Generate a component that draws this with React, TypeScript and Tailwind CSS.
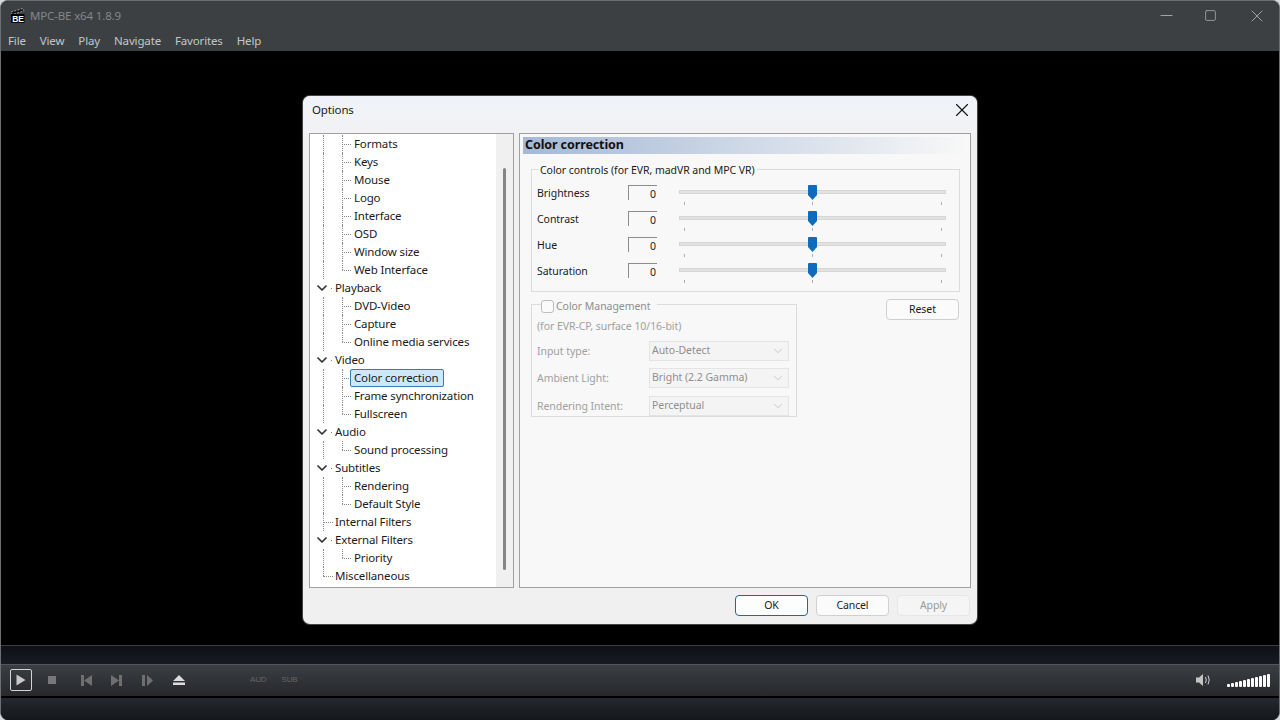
import { ReactNode } from 'react';
import { X, Minus, Square, ChevronDown } from 'lucide-react';

type TreeRow = {
  label: string;
  // level 0 rows sit on the first guide, level 1 rows on the second
  level: 0 | 1;
  expander?: boolean;
  lastChild?: boolean;
  selected?: boolean;
};

const treeRows: TreeRow[] = [
  { label: 'Formats', level: 1 },
  { label: 'Keys', level: 1 },
  { label: 'Mouse', level: 1 },
  { label: 'Logo', level: 1 },
  { label: 'Interface', level: 1 },
  { label: 'OSD', level: 1 },
  { label: 'Window size', level: 1 },
  { label: 'Web Interface', level: 1, lastChild: true },
  { label: 'Playback', level: 0, expander: true },
  { label: 'DVD-Video', level: 1 },
  { label: 'Capture', level: 1 },
  { label: 'Online media services', level: 1, lastChild: true },
  { label: 'Video', level: 0, expander: true },
  { label: 'Color correction', level: 1, selected: true },
  { label: 'Frame synchronization', level: 1 },
  { label: 'Fullscreen', level: 1, lastChild: true },
  { label: 'Audio', level: 0, expander: true },
  { label: 'Sound processing', level: 1, lastChild: true },
  { label: 'Subtitles', level: 0, expander: true },
  { label: 'Rendering', level: 1 },
  { label: 'Default Style', level: 1, lastChild: true },
  { label: 'Internal Filters', level: 0 },
  { label: 'External Filters', level: 0, expander: true },
  { label: 'Priority', level: 1, lastChild: true },
  { label: 'Miscellaneous', level: 0, lastChild: true },
];

function TreeItem({ row }: { row: TreeRow }) {
  if (row.level === 0) {
    return (
      <div className="flex h-[18px] items-center">
        <div className="relative h-full w-[25px] shrink-0">
          {row.expander ? (
            <>
              <ChevronDown size={16} strokeWidth={2.6} className="absolute left-[4px] top-[1px] text-[#333]" />
              <span className="absolute left-[21px] top-[9px] h-px w-px bg-[#777]" />
            </>
          ) : (
            <>
              <span className={`absolute left-[13px] top-0 border-l border-dotted border-[#888] ${row.lastChild ? 'h-[9px]' : 'h-full'}`} />
              <span className="absolute left-[13px] top-[9px] w-[10px] border-t border-dotted border-[#888]" />
            </>
          )}
        </div>
        <span className="mb-[1px] text-[#1a1a1a]">{row.label}</span>
      </div>
    );
  }
  return (
    <div className="flex h-[18px] items-center">
      <div className="relative h-full w-[44px] shrink-0">
        <span className="absolute left-[13px] top-0 h-full border-l border-dotted border-[#888]" />
        <span className={`absolute left-[32px] top-0 border-l border-dotted border-[#888] ${row.lastChild ? 'h-[9px]' : 'h-full'}`} />
        <span className="absolute left-[32px] top-[9px] w-[9px] border-t border-dotted border-[#888]" />
      </div>
      <span
        className={
          row.selected
            ? '-ml-[4px] w-[94px] rounded-[2px] border border-[#2f7fb5] bg-[#cce8ff] pl-[3px] leading-[15px] pb-[1px] text-[#1a1a1a]'
            : 'mb-[1px] text-[#1a1a1a]'
        }
      >
        {row.label}
      </span>
    </div>
  );
}

function SliderRow({ label }: { label: string }) {
  return (
    <div className="flex h-[26px] items-start">
      <span className="w-[91px] shrink-0 pt-[1px] text-[#1a1a1a]">{label}</span>
      <span className="h-[15px] w-[29px] shrink-0 border-l border-t border-[#8c8c8c] pr-[1px] text-right leading-[17px] text-[#1a1a1a]">
        0
      </span>
      <div className="relative ml-[22px] h-[24px] w-[267px]">
        <div className="absolute left-0 right-0 top-[5px] h-[4px] border border-[#d6d6d6] bg-[#e2e2e2]" />
        <span className="absolute left-[5px] top-[17px] h-[3px] w-px bg-[#b0b0b0]" />
        <span className="absolute left-[133px] top-[17px] h-[3px] w-px bg-[#b0b0b0]" />
        <span className="absolute left-[262px] top-[17px] h-[3px] w-px bg-[#b0b0b0]" />
        <svg className="absolute left-[129px] top-0" width="9" height="15" viewBox="0 0 9 15">
          <path d="M0 1q0-1 1-1h7q1 0 1 1v9l-4.500 5L0 10z" fill="#0f6cbd" />
        </svg>
      </div>
    </div>
  );
}

function Combo({ label, value, mb }: { label: string; value: string; mb: string }) {
  return (
    <div className={`flex items-center ${mb}`}>
      <span className="w-[117px] shrink-0 pl-[5px] pt-[2px] text-[#a0a0a0]">{label}</span>
      <div className="flex h-[20px] w-[140px] items-center justify-between border border-[#e4e4e4] bg-[#f4f4f4] pl-[2px] pr-[3px] text-[#8f8f8f]">
        {value}
        <ChevronDown size={14} strokeWidth={1} className="text-[#a8a8a8]" />
      </div>
    </div>
  );
}

function DialogButton({ children, variant }: { children: ReactNode; variant?: 'default' | 'disabled' }) {
  const look =
    variant === 'default'
      ? 'border-[#1a6a9e] bg-[#fdfdfd] text-[#1a1a1a]'
      : variant === 'disabled'
        ? 'border-[#e6e6e6] bg-[#f5f5f5] text-[#9a9a9a]'
        : 'border-[#d0d0d0] bg-[#fbfbfb] text-[#1a1a1a]';
  return <button className={`h-[21px] w-[73px] rounded-[4px] border text-[10.5px] ${look}`}>{children}</button>;
}

function Logo() {
  return (
    <svg width="15" height="15" viewBox="0 0 15 15">
      <path d="M1 4 13 0.500 14 3 2 6.500z" fill="#111" stroke="#eee" strokeWidth="0.600" strokeDasharray="2 1.400" />
      <rect x="1" y="6" width="13.500" height="9" fill="#000" />
      <text x="2.200" y="13.600" fontSize="8.500" fontWeight="700" fill="#fff" fontFamily="Liberation Sans, sans-serif">
        BE
      </text>
    </svg>
  );
}

const volumeBars = [3, 4, 5, 6, 7, 8, 9, 10, 11, 12, 13];

function Transport() {
  return (
    <div className="flex h-[32px] items-center border-t border-[#53565a] bg-gradient-to-b from-[#3b3e42] to-[#26282c] pb-[1px] pl-[9px] pr-[9px]">
      <button className="flex h-[22px] w-[22px] items-center justify-center rounded-[2px] border border-[#d4d4d4]">
        <svg width="10" height="12" viewBox="0 0 10 12">
          <path d="M0.500 0.500 9.500 6 0.500 11.500z" fill="#c8c8c8" />
        </svg>
      </button>
      <span className="ml-[16px] h-[8px] w-[8px] bg-[#777]" />
      <svg className="ml-[25px]" width="11" height="11" viewBox="0 0 11 11">
        <path d="M0 0h3v11H0zM11 0v11L3 5.500z" fill="#6f6f6f" />
      </svg>
      <svg className="ml-[19px]" width="11" height="11" viewBox="0 0 11 11">
        <path d="M8 0h3v11H8zM0 0v11L8 5.500z" fill="#6f6f6f" />
      </svg>
      <svg className="ml-[20px]" width="11" height="11" viewBox="0 0 11 11">
        <path d="M0 0h3v11H0zM5 0v11l6-5.500z" fill="#6f6f6f" />
      </svg>
      <svg className="ml-[20px]" width="12" height="10" viewBox="0 0 12 10">
        <path d="M6 0l6 6H0zM0 7.500h12V10H0z" fill="#dcdcdc" />
      </svg>
      <span className="ml-[65px] font-['Liberation_Sans',sans-serif] text-[8px] text-[#666]">AUD</span>
      <span className="ml-[15px] font-['Liberation_Sans',sans-serif] text-[8px] text-[#666]">SUB</span>
      <svg className="ml-auto" width="16" height="14" viewBox="0 0 16 14">
        <path d="M0 4.500h3L7 1v12L3 9.500H0z" fill="#c4c4c4" />
        <path d="M9.500 4q1.500 3 0 6M12 2.500q2.500 4.500 0 9" fill="none" stroke="#d0d0d0" strokeWidth="1" />
      </svg>
      <div className="ml-[15px] flex h-[14px] items-end gap-px">
        {volumeBars.map((h, i) => (
          <span key={i} className="w-[3px] rounded-[1px] bg-white" style={{ height: h }} />
        ))}
      </div>
    </div>
  );
}

export default function App() {
  return (
    <div className="h-[720px] w-[1280px] overflow-hidden bg-[#d8d8d8] font-['Noto_Sans',sans-serif] text-[11.5px] tracking-[-0.15px]">
      <div className="flex h-full flex-col overflow-hidden rounded-[8px] border-x border-t border-[#6d7073] bg-black">
        {/* Title and menu */}
        <div className="bg-[#3c4043]">
          <div className="flex h-[29px] items-center pl-[9px] text-[#83878a]">
            <Logo />
            <span className="ml-[5px]">MPC-BE x64 1.8.9</span>
            <div className="ml-auto flex items-center pr-[12px] text-[#a8aaac]">
              <Minus size={19} strokeWidth={1.2} />
              <Square size={13} strokeWidth={1.5} className="ml-[28px]" />
              <X size={20} strokeWidth={1.1} className="ml-[30px]" />
            </div>
          </div>
          <div className="flex h-[21px] items-center gap-[14px] pl-[7px] text-[#c3c6c8]">
            <span>File</span>
            <span>View</span>
            <span>Play</span>
            <span>Navigate</span>
            <span>Favorites</span>
            <span>Help</span>
          </div>
        </div>

        {/* Video area, holds the dialog */}
        <div className="flex h-[594px] justify-center pt-[45px]">
          <div className="flex h-[528px] w-[674px] flex-col rounded-[7px] bg-[#f0f0f0] shadow-[0_0_0_1px_#444]">
            <div className="flex h-[37px] items-center justify-between rounded-t-[7px] bg-gradient-to-b from-[#eff3f9] to-[#f2f2f4] pb-[9px] pl-[9px] pr-[4px] text-[#1a1a1a]">
              <span>Options</span>
              <X size={22} strokeWidth={1.2} className="text-[#111]" />
            </div>

            <div className="flex h-[455px] gap-[5px] px-[6px]">
              {/* Page tree */}
              <div className="flex w-[205px] border border-[#a0a0a0] bg-white">
                <div className="flex-1 overflow-hidden pt-px">
                  {treeRows.map((row) => (
                    <TreeItem key={row.label} row={row} />
                  ))}
                </div>
                <div className="w-[17px] bg-[#f0f0f0] pl-[7px] pt-[34px]">
                  <div className="h-[402px] w-[3px] rounded-full bg-[#858585]" />
                </div>
              </div>

              {/* Page body */}
              <div className="w-[452px] border border-[#a0a0a0] bg-[#f8f8f8] pl-[3px] pr-[3px] pt-[3px] text-[10.5px] tracking-[-0.05px]">
                <div className="h-[17px] bg-gradient-to-r from-[#a5b9d6] to-transparent pl-[2px] text-[12.5px] font-bold leading-[15px] tracking-[-0.1px] text-[#111]">
                  Color correction
                </div>

                <div className="relative ml-[8px] mt-[15px] h-[123px] w-[429px] border border-[#dcdcdc] pl-[5px] pt-[15px]">
                  <span className="absolute left-[6px] top-[-7px] bg-[#f8f8f8] px-[2px] leading-[14px] text-[#1a1a1a]">
                    Color controls (for EVR, madVR and MPC VR)
                  </span>
                  <SliderRow label="Brightness" />
                  <SliderRow label="Contrast" />
                  <SliderRow label="Hue" />
                  <SliderRow label="Saturation" />
                </div>

                <div className="ml-[8px] mt-[7px] flex items-start justify-between pr-[8px]">
                  <div className="relative mt-[5px] h-[113px] w-[266px] border border-[#dcdcdc] pt-[14px]">
                    <div className="absolute left-[9px] top-[-6px] flex items-center bg-[#f8f8f8] pr-[6px] leading-[13px] text-[#8f8f8f]">
                      <span className="mr-[2px] h-[13px] w-[13px] rounded-[3px] border border-[#bdbdbd] bg-[#fafafa]" />
                      <span className="mt-[1px]">Color Management</span>
                    </div>
                    <div className="mb-[6px] pl-[5px] text-[#a0a0a0]">(for EVR-CP, surface 10/16-bit)</div>
                    <Combo label="Input type:" value="Auto-Detect" mb="mb-[7px]" />
                    <Combo label="Ambient Light:" value="Bright (2.2 Gamma)" mb="mb-[8px]" />
                    <Combo label="Rendering Intent:" value="Perceptual" mb="" />
                  </div>
                  <button className="h-[21px] w-[73px] rounded-[4px] border border-[#cfcfcf] bg-[#fbfbfb] pt-[1px] text-[#1a1a1a]">
                    Reset
                  </button>
                </div>
              </div>
            </div>

            <div className="flex flex-1 items-start justify-end gap-[8px] pr-[7px] pt-[7px]">
              <DialogButton variant="default">OK</DialogButton>
              <DialogButton>Cancel</DialogButton>
              <DialogButton variant="disabled">Apply</DialogButton>
            </div>
          </div>
        </div>

        {/* Seek bar strip, transport, status */}
        <div className="h-[19px] border-t border-[#3a3d44] bg-gradient-to-b from-[#0d1015] to-[#181b21]" />
        <Transport />
        <div className="h-[2px] bg-black" />
        <div className="flex-1 bg-gradient-to-b from-[#25292d] to-[#14181c]" />
      </div>
    </div>
  );
}
